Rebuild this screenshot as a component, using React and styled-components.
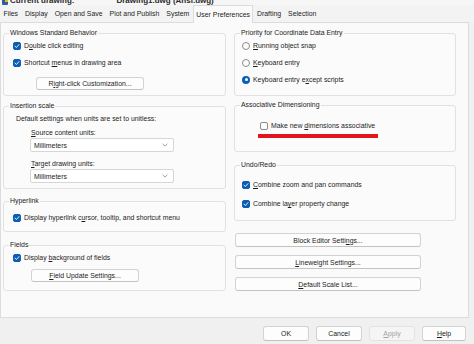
import React from 'react';
import styled, { createGlobalStyle, css } from 'styled-components';

const Global = createGlobalStyle`
  html, body { margin: 0; padding: 0; }
  body {
    width: 474px; height: 344px; overflow: hidden;
    background: #f0f0f0;
    font-family: "Liberation Sans", Arial, sans-serif;
    font-size: 6.9px;
    color: #1c1c1c;
  }
  u { text-decoration-thickness: 0.6px; text-underline-offset: 1px; }
`;

const Window = styled.div`
  width: 474px; height: 344px;
  display: flex; flex-direction: column;
  background: #f0f0f0; overflow: hidden;
`;

const TitleBar = styled.div`
  height: 5px; flex: none;
  display: flex; align-items: flex-end; gap: 2px;
  overflow: hidden; background: #f6f6f6;
  padding-left: 2px;
`;

const TitleIcon = styled.svg`
  width: 6px; height: 6px; flex: none; margin-bottom: 0;
`;

const TitleText = styled.span`
  font-size: 8px; line-height: 8px; font-weight: bold; color: #2a2a2a;
  margin-left: ${p => p.$ml || 0}px; margin-bottom: 0px; white-space: nowrap;
`;

const TabStrip = styled.div`
  height: 17px; flex: none;
  display: flex; align-items: stretch;
  background: #f3f3f3;
  position: relative; z-index: 1;
`;

const Tab = styled.div`
  padding: 0 3.5px;
  display: flex; align-items: center;
  white-space: nowrap; box-sizing: border-box;
  ${p => p.$active && css`
    background: #fafafa;
    border: 1px solid #dcdcdc; border-bottom: none;
    margin-bottom: -1px; padding: 0 2.5px;
  `}
`;

const Panel = styled.div`
  height: 296px; width: 469px; flex: none; box-sizing: border-box;
  border: 1px solid #dcdcdc;
  background: #fafafa;
  display: flex; gap: 8px;
  padding: 6px 0 0 2px;
`;

const Column = styled.div`
  width: ${p => p.$w}px; flex: none;
  display: flex; flex-direction: column;
`;

const Group = styled.fieldset`
  margin: ${p => p.$mt || 0}px 0 0 0;
  padding: 0 0 ${p => p.$pb}px 0;
  border: 1px solid #e1e1e1; border-radius: 3px;
  min-width: 0;
  display: flex; flex-direction: column;
  background: #fbfbfb;
`;

const Legend = styled.legend`
  margin-left: 5px; padding: 0 1px;
  height: 8px; line-height: 8px;
  color: #222;
`;

const Row = styled.label`
  height: ${p => p.$h}px; margin-top: ${p => p.$mt || 0}px;
  padding-left: ${p => p.$pl}px;
  display: flex; align-items: center; gap: 3px;
  white-space: nowrap; flex: none;
`;

const Text = styled.div`
  height: 10px; line-height: 10px; flex: none;
  margin-top: ${p => p.$mt || 0}px;
  padding-left: ${p => p.$pl}px;
  white-space: nowrap;
`;

const Box = styled.span`
  width: 8px; height: 8px; box-sizing: border-box; flex: none;
  border-radius: 2px;
  display: flex; align-items: center; justify-content: center;
  ${p => p.$on ? css`
    background: #0a5fb4; border: 1px solid #0a5fb4;
  ` : css`
    background: #fdfdfd; border: 1px solid #8c8c8c;
  `}
`;

const Radio = styled.span`
  width: 8px; height: 8px; box-sizing: border-box; flex: none;
  border-radius: 50%;
  display: flex; align-items: center; justify-content: center;
  ${p => p.$on ? css`
    background: #0a5fb4;
    &::after { content: ''; width: 3px; height: 3px; border-radius: 50%; background: #fff; }
  ` : css`
    background: #fdfdfd; border: 1px solid #8c8c8c;
  `}
`;

const Select = styled.div`
  margin-left: 26px; width: 144px; height: 14px; flex: none;
  box-sizing: border-box;
  border: 1px solid #d6d6d6; border-radius: 2px;
  background: #fff;
  display: flex; align-items: center; justify-content: space-between;
  padding: 0 5px 0 3px;
`;

const Btn = styled.button`
  font: inherit; color: #1c1c1c;
  width: ${p => p.$w}px; height: ${p => p.$h || 13}px; flex: none;
  margin-left: ${p => p.$ml || 0}px; margin-top: ${p => p.$mt || 0}px;
  box-sizing: border-box; padding: 0;
  border: 1px solid #d3d3d3; border-bottom-color: #c2c2c2;
  border-radius: 3px;
  background: #fdfdfd;
  display: flex; align-items: center; justify-content: center;
  ${p => p.$disabled && css`
    color: #a3a3a3; background: #f5f5f5; border-color: #e2e2e2;
  `}
`;

const RedMark = styled.div`
  height: 4px; width: 120px; margin-left: 23px; flex: none;
  background: #e3141c;
`;

const Footer = styled.div`
  flex: 1;
  display: flex; justify-content: flex-end; align-items: flex-start;
  gap: 7px; padding: 8px 8px 0 0;
`;

const Check = ({ on }) => (
  <Box $on={on}>
    {on && (
      <svg width="6" height="6" viewBox="0 0 6 6">
        <path d="M1 3.1 L2.4 4.5 L5 1.6" fill="none" stroke="#fff" strokeWidth="0.9" strokeLinecap="round" strokeLinejoin="round" />
      </svg>
    )}
  </Box>
);

const Chevron = () => (
  <svg width="6" height="4" viewBox="0 0 6 4">
    <path d="M0.6 0.8 L3 3.1 L5.4 0.8" fill="none" stroke="#777" strokeWidth="0.7" />
  </svg>
);

const tabs = ['Files', 'Display', 'Open and Save', 'Plot and Publish', 'System', 'User Preferences', 'Drafting', 'Selection'];

export default function App() {
  return (
    <>
      <Global />
      <Window>
        <TitleBar>
          <TitleIcon viewBox="0 0 6 6">
            <rect x="0" y="0" width="6" height="6" rx="1" fill="#2b5f9e" />
            <rect x="3" y="0" width="3" height="3" fill="#e8b830" />
          </TitleIcon>
          <TitleText>Current drawing:</TitleText>
          <TitleText $ml={40}>Drawing1.dwg  (Ansi.dwg)</TitleText>
        </TitleBar>
        <TabStrip>
          {tabs.map(t => <Tab key={t} $active={t === 'User Preferences'}>{t}</Tab>)}
        </TabStrip>
        <Panel>
          <Column $w={223}>
            <Group $pb={5}>
              <Legend>Windows Standard Behavior</Legend>
              <Row $h={17} $pl={9}><Check on /> <span>D<u>o</u>uble click editing</span></Row>
              <Row $h={17} $pl={9}><Check on /> <span>Shortcut <u>m</u>enus in drawing area</span></Row>
              <Btn $w={108} $ml={32} $mt={6}>R<u>i</u>ght-click Customization...</Btn>
            </Group>
            <Group $mt={6} $pb={5}>
              <Legend>Insertion scale</Legend>
              <Text $mt={4} $pl={12}>Default settings when units are set to unitless:</Text>
              <Text $mt={4} $pl={27}><u>S</u>ource content units:</Text>
              <Select><span>Millimeters</span><Chevron /></Select>
              <Text $mt={7} $pl={27}><u>T</u>arget drawing units:</Text>
              <Select><span>Millimeters</span><Chevron /></Select>
            </Group>
            <Group $mt={8} $pb={5}>
              <Legend>Hyperlink</Legend>
              <Row $h={17} $mt={4} $pl={9}><Check on /> <span>Display hyperlink c<u>u</u>rsor, tooltip, and shortcut menu</span></Row>
            </Group>
            <Group $mt={9} $pb={8}>
              <Legend>Fields</Legend>
              <Row $h={17} $pl={9}><Check on /> <span>Display <u>b</u>ackground of fields</span></Row>
              <Btn $w={108} $ml={27} $mt={3}><u>F</u>ield Update Settings...</Btn>
            </Group>
          </Column>
          <Column $w={222}>
            <Group $pb={7}>
              <Legend>Priority for Coordinate Data Entry</Legend>
              <Row $h={17} $pl={7}><Radio /> <span><u>R</u>unning object snap</span></Row>
              <Row $h={17} $pl={7}><Radio /> <span><u>K</u>eyboard entry</span></Row>
              <Row $h={17} $pl={7}><Radio $on /> <span>Keyboard entry e<u>x</u>cept scripts</span></Row>
            </Group>
            <Group $mt={5} $pb={13}>
              <Legend>Associative Dimensioning</Legend>
              <Row $h={17} $mt={8} $pl={25}><Check /> <span>Make new <u>d</u>imensions associative</span></Row>
              <RedMark />
            </Group>
            <Group $mt={9} $pb={7}>
              <Legend>Undo/Redo</Legend>
              <Row $h={19} $mt={6} $pl={7}><Check on /> <span><u>C</u>ombine zoom and pan commands</span></Row>
              <Row $h={19} $pl={7}><Check on /> <span>Combine la<u>y</u>er property change</span></Row>
            </Group>
            <Btn $w={186} $h={14} $ml={1} $mt={12}>Block Editor Setti<u>n</u>gs...</Btn>
            <Btn $w={186} $h={14} $ml={1} $mt={8}><u>L</u>ineweight Settings...</Btn>
            <Btn $w={186} $h={14} $ml={1} $mt={8}><u>D</u>efault Scale List...</Btn>
          </Column>
        </Panel>
        <Footer>
          <Btn $w={46} $h={15}>OK</Btn>
          <Btn $w={46} $h={15}>Cancel</Btn>
          <Btn $w={46} $h={15} $disabled><u>A</u>pply</Btn>
          <Btn $w={44} $h={15}><u>H</u>elp</Btn>
        </Footer>
      </Window>
    </>
  );
}
